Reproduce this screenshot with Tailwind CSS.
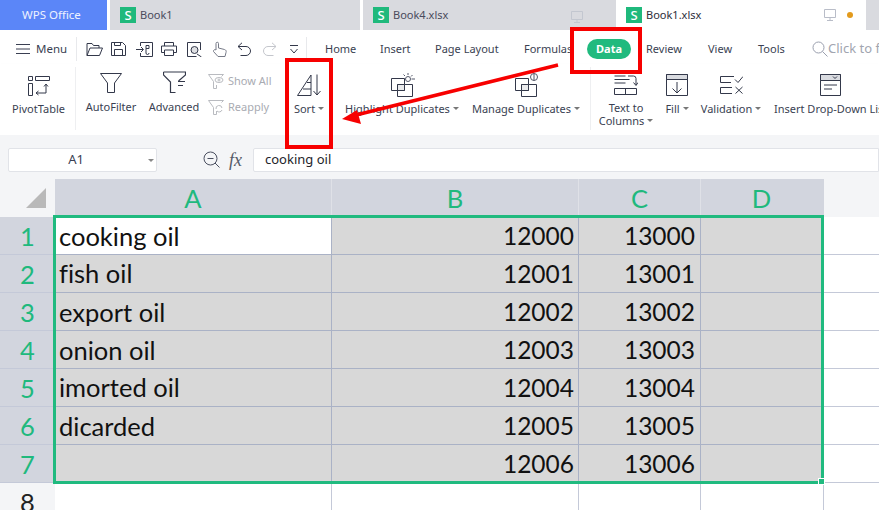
<!DOCTYPE html>
<html lang="en">
  <head>
    <meta charset="utf-8" />
    <title>Book1.xlsx</title>
    <script src="https://cdn.jsdelivr.net/npm/@tailwindcss/browser@4"></script>
  </head>
  <body class="bg-white">
    <div class="relative h-[510px] w-[879px] overflow-hidden bg-white font-['Noto_Sans',sans-serif] text-[11px] text-[#3a3f52]">
      <!-- tabs -->
      <div class="flex h-[30px] bg-white text-[11px] *:shrink-0">
        <div class="flex w-[107px] items-center bg-[#5b86f8] pl-[22px] text-[11.5px] text-[#eef2ff]">WPS Office</div>
        <div class="ml-[3px] flex w-[250px] items-center gap-[4px] bg-[#d9dadf] pl-[10px]">
          <span class="flex h-4 w-4 items-center justify-center bg-[#1fb97c] text-[13px] leading-none font-medium text-white">S</span>
          <span class="text-[#4a4a5c]">Book1</span>
        </div>
        <div class="relative ml-[3px] flex w-[253px] items-center gap-[4px] bg-[#d9dadf] pl-[10px]">
          <span class="flex h-4 w-4 items-center justify-center bg-[#1fb97c] text-[13px] leading-none font-medium text-white">S</span>
          <span class="text-[#4a4a5c]">Book4.xlsx</span>
          <svg class="absolute top-[11px] left-[208px]" width="12" height="12" viewBox="0 0 12 12" fill="none" stroke="#c3c7d0"><path d="M.5.5h11v8H.5zM6 8.5v3M3 11.5h6" /></svg>
        </div>
        <div class="flex w-[250px] items-center bg-white pl-[10px]">
          <span class="flex h-4 w-4 items-center justify-center bg-[#1fb97c] text-[13px] leading-none font-medium text-white">S</span>
          <span class="ml-[4px] w-[178px] text-[#2e2e3a]">Book1.xlsx</span>
          <svg width="12" height="12" viewBox="0 0 12 12" fill="none" stroke="#b9bdc8"><path d="M.5.5h11v8H.5zM6 8.5v3M3 11.5h6" /></svg>
          <span class="ml-[11px] h-[6px] w-[6px] rounded-full bg-[#e39a1c]"></span>
        </div>
        <div class="w-[13px] bg-[#d9dadf]"></div>
      </div>

      <!-- menu row -->
      <div class="flex h-[34px] items-center whitespace-nowrap pt-[4px] *:shrink-0">
        <div class="flex h-[24px] w-[77px] items-center border-r border-[#e8e9ec] pl-4">
          <svg width="14" height="10" viewBox="0 0 14 10" stroke="#3a3f52"><path d="M0 .5h14M0 5h14M0 9.5h14" /></svg>
          <span class="ml-[6px] text-[11.5px]">Menu</span>
        </div>
        <div class="flex h-[24px] w-[230px] items-center border-r border-[#e8e9ec] pl-[9px] *:shrink-0">
          <svg class="mr-[8px]" width="17" height="13" viewBox="0 0 17 13" fill="none" stroke="#33384a"><path d="M1 12.500V.5h5l1.500 2h5.500v2.500M1 12.500l3-7.500h12.500l-3 7.500z" /></svg>
          <svg class="mr-[10px]" width="15" height="14" viewBox="0 0 15 14" fill="none" stroke="#33384a"><path d="M.5.5h11l3 3v10H.5zM3.500 13.500v-6h8v6M3.500.5v3h6v-3" /></svg>
          <svg class="mr-[8px]" width="17" height="15" viewBox="0 0 17 15" fill="none" stroke="#33384a"><path d="M4.500 4V.5h12v14h-12V11M0 7.500h7M5 5l2.500 2.500L5 10M10 3.500h3v3h-3zM10 6.500V11a1.500 1.500 0 0 0 3 0" /></svg>
          <svg class="mr-[10px]" width="16" height="14" viewBox="0 0 16 14" fill="none" stroke="#33384a"><path d="M3.500 4V.5h9V4M3.500 10.500H.5V4h15v6.500h-3M3.500 8h9v5.500h-9z" /></svg>
          <svg class="mr-[10px]" width="15" height="15" viewBox="0 0 15 15" fill="none" stroke="#33384a"><path d="M13.500 8V.5H.5v14h9M10 12l4.500 3" /><circle cx="7.500" cy="8" r="3.500" fill="#dfe0e3" /></svg>
          <svg class="mr-[10px]" width="15" height="16" viewBox="0 0 15 16" fill="none" stroke="#777b88"><path d="M4 9V2.500a1.200 1.200 0 0 1 2.500 0V7l6 1.500c1.500.5 2 1.500 1.500 3l-1 4H6l-4.500-5C1 9 3 8 4 9z" /></svg>
          <svg class="mr-[12px]" width="14" height="14" viewBox="0 0 14 14" fill="none" stroke="#33384a"><path d="M5 .8 1 4.500 5 8M1 4.500h8a4.500 4.500 0 0 1 0 9H3.500" /></svg>
          <svg class="mr-[13px]" width="14" height="14" viewBox="0 0 14 14" fill="none" stroke="#c4c6cc"><path d="M9 .8l4 3.700L9 8M13 4.500H5a4.500 4.500 0 0 0 0 9h5.500" /></svg>
          <svg width="8" height="9" viewBox="0 0 8 9" fill="none" stroke="#33384a"><path d="M0 .5h8M.5 4 4 8l3.500-4" /></svg>
        </div>
        <span class="ml-[18px] w-[55px]">Home</span>
        <span class="w-[55px]">Insert</span>
        <span class="w-[89px]">Page Layout</span>
        <span class="w-[63px]">Formulas</span>
        <span class="flex h-5 w-[44px] items-center justify-center rounded-full bg-[#20ba7e] font-bold text-white">Data</span>
        <span class="ml-[15px] w-[62px]">Review</span>
        <span class="w-[50px]">View</span>
        <span class="w-[54px]">Tools</span>
        <svg width="16" height="16" viewBox="0 0 16 16" fill="none" stroke="#9a9fae"><circle cx="6.500" cy="6.500" r="5.500" /><path d="m10.500 10.500 5 5" /></svg>
        <span class="text-[13px] text-[#a1a5b0]">Click to find</span>
      </div>

      <!-- ribbon -->
      <div class="flex h-[71px] items-start whitespace-nowrap shadow-[0_1px_2px_rgba(0,0,0,0.06)] *:shrink-0">
        <div class="mt-[3px] flex h-[63px] w-[76px] flex-col items-center border-r border-[#eeeff1] pl-[2px]">
          <svg class="mt-[9px]" width="22" height="20" viewBox="0 0 22 20" fill="none" stroke="#33384a"><path d="M.5.5h4v4h-4zM7.500.5h14v4h-14zM.5 7.500h4v12h-4zM18 9v8H8M16 10.500 18 8l2 2.500M10.500 15 8 17l2.500 2" /></svg>
          <span class="mt-[5px]">PivotTable</span>
        </div>
        <div class="ml-[10px] flex w-[50px] flex-col items-center">
          <svg class="mt-[9px]" width="22" height="20" viewBox="0 0 22 20" fill="none" stroke="#33384a"><path d="M.5.500h21l-7 9.500v9.500h-7V10z" /></svg>
          <span class="mt-[6px]">AutoFilter</span>
        </div>
        <div class="ml-[12px] flex w-[52px] flex-col items-center">
          <svg class="mt-[7px]" width="23" height="22" viewBox="0 0 23 22" fill="none" stroke="#33384a" stroke-width="1.200"><path d="M.5 1h22v3l-7 6M.5 1v3l7 7v10.500h5M15 10.500h7M15 14.500h5" /></svg>
          <span class="mt-[6px]">Advanced</span>
        </div>
        <div class="ml-[8px] flex w-[72px] flex-col text-[#a9abb2]">
          <div class="mt-[7px] flex h-[20px] items-center gap-[4px]">
            <svg width="16" height="15" viewBox="0 0 16 15" fill="none" stroke="#b9bbc0"><path d="M.5.500h15l-2 2M.5.500l5 7v7h3V11" /><ellipse cx="11" cy="6" rx="4" ry="2.500" /><circle cx="11" cy="6" r="1" /></svg>
            <span>Show All</span>
          </div>
          <div class="mt-[6px] flex h-[20px] items-center gap-[4px]">
            <svg width="16" height="15" viewBox="0 0 16 15" fill="none" stroke="#b9bbc0"><path d="M.5.500h15l-2 2M.5.500l5 7v7h3V11" /><path d="M8 9a3 3 0 0 1 6-1M14 10a3 3 0 0 1-5 1" /></svg>
            <span>Reapply</span>
          </div>
        </div>
        <div class="ml-[7px] flex w-[44px] flex-col items-center">
          <svg class="mt-[10px]" width="25" height="22" viewBox="0 0 25 22" fill="none" stroke="#33384a"><path d="M.5 21.500 14 1v20.500zM6 15h8M10 8.500h4M20 .5v20.500M16.500 17l3.500 4 3.500-4" /></svg>
          <span class="mt-[5px]">Sort<span class="ml-[3px] inline-block border-x-[3px] border-t-[3px] border-x-transparent border-t-[#777] align-[3px]"></span></span>
        </div>
        <div class="ml-[14px] flex w-[114px] flex-col items-center">
          <svg class="mt-[9px]" width="25" height="24" viewBox="0 0 25 24" fill="none" stroke="#33384a"><path d="M1.500 5.500h13v12h-13zM7.500 11.500h15v12h-15z" /><path d="M7.500 11.500h7v6h-7z" fill="#e9eaec" /><circle cx="18" cy="6" r="2.500" stroke="#55596a" /><path d="M18 0v2M13.500 1.500 15 3M22.500 2 21 3.500M21.500 6H25" stroke="#55596a" /></svg>
          <span class="mt-[4px]">Highlight Duplicates<span class="ml-[3px] inline-block border-x-[3px] border-t-[3px] border-x-transparent border-t-[#777] align-[3px]"></span></span>
        </div>
        <div class="ml-[11px] flex w-[112px] flex-col items-center">
          <svg class="mt-[9px]" width="25" height="24" viewBox="0 0 25 24" fill="none" stroke="#33384a"><path d="M1.500 5.500h13v12h-13zM7.500 11.500h15v12h-15z" /><path d="M7.500 11.500h7v6h-7z" fill="#e9eaec" /><circle cx="20" cy="4" r="3.500" stroke="#55596a" /><path d="M20 .5v7" stroke="#55596a" /></svg>
          <span class="mt-[4px]">Manage Duplicates<span class="ml-[3px] inline-block border-x-[3px] border-t-[3px] border-x-transparent border-t-[#777] align-[3px]"></span></span>
        </div>
        <div class="mt-[3px] ml-[8px] h-[63px] w-px bg-[#eeeff1]"></div>
        <div class="ml-[9px] flex w-[52px] flex-col items-center">
          <svg class="mt-[11px]" width="24" height="20" viewBox="0 0 24 20" fill="none" stroke="#33384a"><path d="M.5 1h11M.5 4.500h15M.5 8h11M.5 13.500h22v6H.5zM11.500 13.500v6M14 1h5.500A2.500 2.500 0 0 1 22 3.500V10M19.500 7.500l2.500 3 2-3" /></svg>
          <span class="mt-[6px] text-center leading-[13px]">Text to<br />Columns<span class="ml-[3px] inline-block border-x-[3px] border-t-[3px] border-x-transparent border-t-[#777] align-[3px]"></span></span>
        </div>
        <div class="ml-[8px] flex w-[34px] flex-col items-center">
          <svg class="mt-[10px]" width="22" height="22" viewBox="0 0 22 22" fill="none" stroke="#33384a"><path d="M.5.5h21v21H.5z" /><path d="M.5.5h21v5H.5z" fill="#d9dbe0" /><path d="M11 8v11M6.500 14.500 11 19l4.500-4.500" /></svg>
          <span class="mt-[5px]">Fill<span class="ml-[3px] inline-block border-x-[3px] border-t-[3px] border-x-transparent border-t-[#777] align-[3px]"></span></span>
        </div>
        <div class="ml-[6px] flex w-[62px] flex-col items-center">
          <svg class="mt-[12px]" width="23" height="18" viewBox="0 0 23 18" fill="none" stroke="#33384a"><path d="M14 .5H.5v6H11M12 11.500H.5v6H12M15 3.500l3 3 5-6M15.500 11l7 6.500M22.500 11l-7 6.500" /></svg>
          <span class="mt-[7px]">Validation<span class="ml-[3px] inline-block border-x-[3px] border-t-[3px] border-x-transparent border-t-[#777] align-[3px]"></span></span>
        </div>
        <div class="ml-[12px] flex flex-col items-center">
          <svg class="mt-[10px]" width="21" height="22" viewBox="0 0 21 22" fill="none" stroke="#33384a"><path d="M.5.5h20v21H.5z" /><path d="M.5.5h20v6H.5z" fill="#d9dbe0" /><path d="m13 2.500 2 2 2-2M4 11h13M4 15h8" /></svg>
          <span class="mt-[5px]">Insert Drop-Down List</span>
        </div>
      </div>

      <!-- formula bar -->
      <div class="flex h-[44px] items-start bg-[#f4f5f7] pt-[13px] *:shrink-0">
        <div class="relative ml-[8px] flex h-[24px] w-[149px] items-center justify-center rounded-[2px] border border-[#e1e3e8] bg-white pr-[13px] text-[13px]">
          A1
          <span class="absolute top-[10px] right-[2px] border-x-[3px] border-t-[3px] border-x-transparent border-t-[#888]"></span>
        </div>
        <svg class="mt-[3px] ml-[46px]" width="17" height="17" viewBox="0 0 17 17" fill="none" stroke="#4a4f60"><circle cx="7.500" cy="7.500" r="6.500" /><path d="M4.500 7.500h6M12 12l4.500 4.500" /></svg>
        <span class="ml-[9px] w-[14px] font-['Liberation_Serif',serif] text-[18px] leading-[24px] text-[#555a68] italic">fx</span>
        <div class="ml-[10px] flex h-[24px] w-[626px] items-center rounded-l-[2px] border border-[#e1e3e8] bg-white pl-[11px] text-[13px] text-[#23242a]">cooking oil</div>
      </div>

      <!-- sheet -->
      <div class="grid grid-cols-[55px_277px_247px_122px_123px_55px] grid-rows-[38px_38px_38px_38px_38px_38px_38px_38px_38px] bg-white font-['Lato',sans-serif] text-[25.5px] text-[#111] [font-variant-ligatures:none]">
        <div class="flex items-end justify-end bg-[#f4f5f7] pr-[9px] pb-[9px]">
          <svg width="20" height="20" viewBox="0 0 20 20"><path d="M20 0v20H0z" fill="#b9b9b9" /></svg>
        </div>
        <div class="flex items-center justify-center border-r border-[#dfe1e7] bg-[#d2d5de] text-[#20b97d]">A</div>
        <div class="flex items-center justify-center border-r border-[#dfe1e7] bg-[#d2d5de] text-[#20b97d]">B</div>
        <div class="flex items-center justify-center border-r border-[#dfe1e7] bg-[#d2d5de] text-[#20b97d]">C</div>
        <div class="flex items-center justify-center bg-[#d2d5de] pr-[2px] text-[#20b97d]">D</div>
        <div class="bg-[#f4f5f7]"></div>

        <div class="flex items-center justify-center border-b border-[#c4c9d8] bg-[#d2d5de] pt-[1px] text-[#20b97d]">1</div>
        <div class="flex items-center border-r border-b border-[#aab2c6] bg-white pt-[1px] pl-[4px]">cooking oil</div>
        <div class="flex items-center justify-end border-r border-b border-[#aab2c6] bg-[#d8d8d8] pt-[2px] pr-[4px] text-[24.5px]">12000</div>
        <div class="flex items-center justify-end border-r border-b border-[#aab2c6] bg-[#d8d8d8] pt-[2px] pr-[5px] text-[24.5px]">13000</div>
        <div class="border-b border-[#aab2c6] bg-[#d8d8d8]"></div>
        <div class="border-b border-[#c4c9d8]"></div>

        <div class="flex items-center justify-center border-b border-[#c4c9d8] bg-[#d2d5de] pt-[1px] text-[#20b97d]">2</div>
        <div class="flex items-center border-r border-b border-[#aab2c6] bg-[#d8d8d8] pl-[4px]">fish oil</div>
        <div class="flex items-center justify-end border-r border-b border-[#aab2c6] bg-[#d8d8d8] pt-[1px] pr-[4px] text-[24.5px]">12001</div>
        <div class="flex items-center justify-end border-r border-b border-[#aab2c6] bg-[#d8d8d8] pt-[1px] pr-[5px] text-[24.5px]">13001</div>
        <div class="border-b border-[#aab2c6] bg-[#d8d8d8]"></div>
        <div class="border-b border-[#c4c9d8]"></div>

        <div class="flex items-center justify-center border-b border-[#c4c9d8] bg-[#d2d5de] pt-[1px] text-[#20b97d]">3</div>
        <div class="flex items-center border-r border-b border-[#aab2c6] bg-[#d8d8d8] pt-[1px] pl-[4px]">export oil</div>
        <div class="flex items-center justify-end border-r border-b border-[#aab2c6] bg-[#d8d8d8] pt-[1px] pr-[4px] text-[24.5px]">12002</div>
        <div class="flex items-center justify-end border-r border-b border-[#aab2c6] bg-[#d8d8d8] pt-[1px] pr-[5px] text-[24.5px]">13002</div>
        <div class="border-b border-[#aab2c6] bg-[#d8d8d8]"></div>
        <div class="border-b border-[#c4c9d8]"></div>

        <div class="flex items-center justify-center border-b border-[#c4c9d8] bg-[#d2d5de] pt-[1px] text-[#20b97d]">4</div>
        <div class="flex items-center border-r border-b border-[#aab2c6] bg-[#d8d8d8] pt-[1px] pl-[4px]">onion oil</div>
        <div class="flex items-center justify-end border-r border-b border-[#aab2c6] bg-[#d8d8d8] pt-[1px] pr-[4px] text-[24.5px]">12003</div>
        <div class="flex items-center justify-end border-r border-b border-[#aab2c6] bg-[#d8d8d8] pt-[1px] pr-[5px] text-[24.5px]">13003</div>
        <div class="border-b border-[#aab2c6] bg-[#d8d8d8]"></div>
        <div class="border-b border-[#c4c9d8]"></div>

        <div class="flex items-center justify-center border-b border-[#c4c9d8] bg-[#d2d5de] pt-[1px] text-[#20b97d]">5</div>
        <div class="flex items-center border-r border-b border-[#aab2c6] bg-[#d8d8d8] pl-[4px]">imorted oil</div>
        <div class="flex items-center justify-end border-r border-b border-[#aab2c6] bg-[#d8d8d8] pt-[1px] pr-[4px] text-[24.5px]">12004</div>
        <div class="flex items-center justify-end border-r border-b border-[#aab2c6] bg-[#d8d8d8] pt-[1px] pr-[5px] text-[24.5px]">13004</div>
        <div class="border-b border-[#aab2c6] bg-[#d8d8d8]"></div>
        <div class="border-b border-[#c4c9d8]"></div>

        <div class="flex items-center justify-center border-b border-[#c4c9d8] bg-[#d2d5de] pt-[1px] text-[#20b97d]">6</div>
        <div class="flex items-center border-r border-b border-[#aab2c6] bg-[#d8d8d8] pt-[1px] pl-[4px]">dicarded</div>
        <div class="flex items-center justify-end border-r border-b border-[#aab2c6] bg-[#d8d8d8] pt-[1px] pr-[4px] text-[24.5px]">12005</div>
        <div class="flex items-center justify-end border-r border-b border-[#aab2c6] bg-[#d8d8d8] pt-[1px] pr-[5px] text-[24.5px]">13005</div>
        <div class="border-b border-[#aab2c6] bg-[#d8d8d8]"></div>
        <div class="border-b border-[#c4c9d8]"></div>

        <div class="flex items-center justify-center border-b border-[#c4c9d8] bg-[#d2d5de] pt-[1px] text-[#20b97d]">7</div>
        <div class="border-r border-b border-[#aab2c6] bg-[#d8d8d8]"></div>
        <div class="flex items-center justify-end border-r border-b border-[#aab2c6] bg-[#d8d8d8] pt-[2px] pr-[4px] text-[24.5px]">12006</div>
        <div class="flex items-center justify-end border-r border-b border-[#aab2c6] bg-[#d8d8d8] pt-[2px] pr-[5px] text-[24.5px]">13006</div>
        <div class="border-b border-[#aab2c6] bg-[#d8d8d8]"></div>
        <div class="border-b border-[#c4c9d8]"></div>

        <div class="flex items-start justify-center bg-[#f4f5f7] text-[#222]">8</div>
        <div class="border-r border-[#c4c9d8]"></div>
        <div class="border-r border-[#c4c9d8]"></div>
        <div class="border-r border-[#c4c9d8]"></div>
        <div class="border-r border-[#c4c9d8]"></div>
        <div></div>
      </div>

      <!-- selection frame -->
      <div class="absolute top-[215px] left-[53px] h-[269px] w-[771px] border-[3px] border-[#20ba7f]">
        <span class="absolute -right-[4px] -bottom-[4px] h-[7px] w-[7px] border border-white bg-[#20ba7f]"></span>
      </div>

      <!-- annotation boxes and arrow -->
      <div class="absolute top-[27px] left-[570px] h-[47px] w-[72px] border-4 border-[#f70000]"></div>
      <div class="absolute top-[58px] left-[285px] h-[91px] w-[48px] border-4 border-[#f70000]"></div>
      <svg class="absolute top-0 left-0" width="879" height="510" viewBox="0 0 879 510" fill="none">
        <path d="M558 65 352 116" stroke="#f70000" stroke-width="3.500" />
        <path d="M342 119 357 110 361 124z" fill="#f70000" />
      </svg>
    </div>
  </body>
</html>
